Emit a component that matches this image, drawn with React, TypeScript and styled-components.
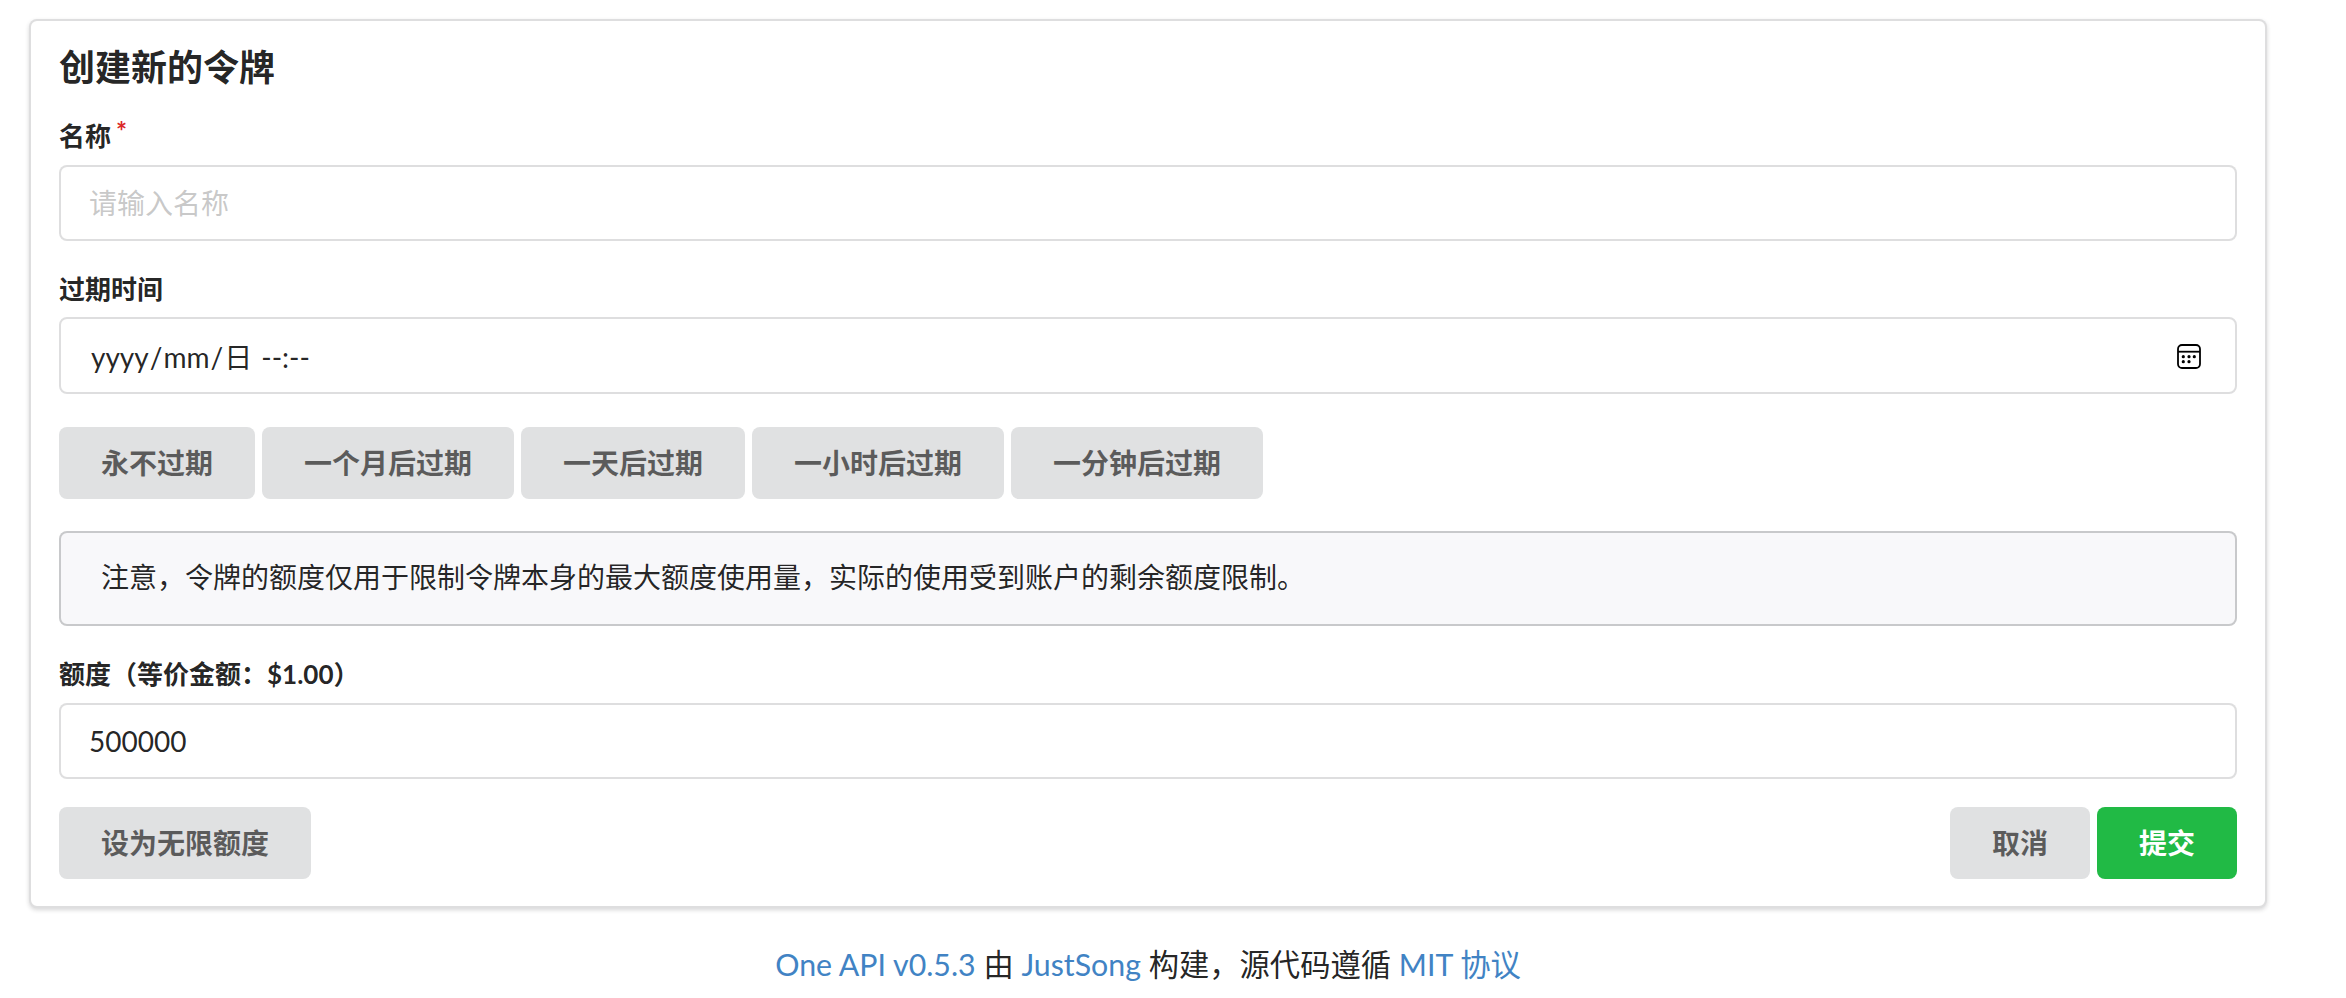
import styled, { createGlobalStyle } from 'styled-components';

const GlobalStyle = createGlobalStyle`
  html, body {
    margin: 0;
    padding: 0;
    background: #fff;
  }
  body {
    font-family: Lato, "Noto Sans CJK SC", "Helvetica Neue", Arial, sans-serif;
    font-size: 28px;
    line-height: 40px;
    color: rgba(0, 0, 0, 0.87);
  }
  * {
    box-sizing: border-box;
  }
`;

const Page = styled.div`
  width: 2346px;
  padding: 19px 79px 0 29px;
`;

const Card = styled.form`
  border: 2px solid rgba(34, 36, 38, 0.15);
  border-radius: 8px;
  box-shadow: 0 2px 4px 0 rgba(34, 36, 38, 0.18);
  padding: 23px 28px 27px;
  background: #fff;
`;

const Title = styled.h3`
  margin: 0 0 29px;
  font-size: 36px;
  line-height: 46px;
  font-weight: 700;
`;

const Field = styled.div<{ $gap: number }>`
  margin-bottom: ${(p) => p.$gap}px;
`;

const Label = styled.label<{ $gap?: number }>`
  display: block;
  margin-bottom: ${(p) => p.$gap ?? 10}px;
  font-size: 26px;
  line-height: 35px;
  font-weight: 700;
`;

const Required = styled.span`
  display: inline-block;
  margin: -5px 0 0 5px;
  vertical-align: top;
  color: #db2828;
`;

const TextInput = styled.input`
  display: block;
  width: 100%;
  height: 76px;
  padding: 19px 28px;
  border: 2px solid rgba(34, 36, 38, 0.15);
  border-radius: 8px;
  outline: none;
  background: #fff;
  font: inherit;
  line-height: 34px;
  color: rgba(0, 0, 0, 0.87);

  &::placeholder {
    color: rgba(191, 191, 191, 0.87);
  }
`;

const DateField = styled.div`
  display: flex;
  align-items: center;
  justify-content: space-between;
  height: 77px;
  padding: 2px 34px 0 30px;
  border: 2px solid rgba(34, 36, 38, 0.15);
  border-radius: 8px;
`;

const DateSlash = styled.span`
  margin: 0 1px;
`;

const DateTime = styled.span`
  margin-left: 2px;
`;

const ButtonRow = styled.div`
  display: flex;
  gap: 7px;
  margin-top: 33px;
`;

const ActionRow = styled.div`
  display: flex;
  justify-content: space-between;
`;

const ActionGroup = styled.div`
  display: flex;
  gap: 7px;
`;

const Button = styled.button<{ $primary?: boolean }>`
  height: 72px;
  padding: 0 42px;
  border: none;
  border-radius: 8px;
  background: ${(p) => (p.$primary ? '#21ba45' : '#e0e1e2')};
  color: ${(p) => (p.$primary ? '#fff' : 'rgba(0, 0, 0, 0.6)')};
  font: inherit;
  font-weight: 700;
  line-height: 28px;
`;

const Message = styled.div`
  margin: 32px 0 31px;
  padding: 26px 42px 29px;
  border-radius: 8px;
  background: #f8f8fa;
  box-shadow: 0 0 0 2px rgba(34, 36, 38, 0.22) inset;
`;

const Footer = styled.footer`
  margin-top: 35px;
  font-size: 30.3px;
  line-height: 42px;
  text-align: center;
`;

const FooterLink = styled.a`
  color: #4183c4;
  text-decoration: none;
`;

const CalendarIcon = () => (
  <svg width="24" height="25" viewBox="0 0 24 25" fill="none">
    <rect x="1" y="1" width="22" height="23" rx="4" stroke="#000" strokeWidth="1.8" />
    <path d="M1 7.7H23" stroke="#000" strokeWidth="1.8" />
    <circle cx="6.3" cy="12.7" r="1.6" fill="#000" />
    <circle cx="12" cy="12.7" r="1.6" fill="#000" />
    <circle cx="17.3" cy="12.7" r="1.6" fill="#000" />
    <circle cx="6.3" cy="17.7" r="1.6" fill="#000" />
    <circle cx="12" cy="17.7" r="1.6" fill="#000" />
  </svg>
);

const expiryOptions = ['永不过期', '一个月后过期', '一天后过期', '一小时后过期', '一分钟后过期'];

const App = () => {
  return (
    <Page>
      <GlobalStyle />
      <Card>
        <Title>创建新的令牌</Title>
        <Field $gap={31}>
          <Label $gap={11}>
            名称<Required>*</Required>
          </Label>
          <TextInput placeholder='请输入名称' />
        </Field>
        <div>
          <Label>过期时间</Label>
          <DateField>
            <span>
              yyyy<DateSlash>/</DateSlash>mm<DateSlash>/</DateSlash>日 <DateTime>--:--</DateTime>
            </span>
            <CalendarIcon />
          </DateField>
        </div>
        <ButtonRow>
          {expiryOptions.map((option) => (
            <Button type='button' key={option}>
              {option}
            </Button>
          ))}
        </ButtonRow>
        <Message>注意，令牌的额度仅用于限制令牌本身的最大额度使用量，实际的使用受到账户的剩余额度限制。</Message>
        <Field $gap={28}>
          <Label $gap={11}>额度（等价金额：$1.00）</Label>
          <TextInput defaultValue='500000' />
        </Field>
        <ActionRow>
          <Button type='button'>设为无限额度</Button>
          <ActionGroup>
            <Button type='button'>取消</Button>
            <Button type='button' $primary>
              提交
            </Button>
          </ActionGroup>
        </ActionRow>
      </Card>
      <Footer>
        <FooterLink href='#'>One API v0.5.3</FooterLink> 由 <FooterLink href='#'>JustSong</FooterLink> 构建，源代码遵循{' '}
        <FooterLink href='#'>MIT 协议</FooterLink>
      </Footer>
    </Page>
  );
};

export default App;
